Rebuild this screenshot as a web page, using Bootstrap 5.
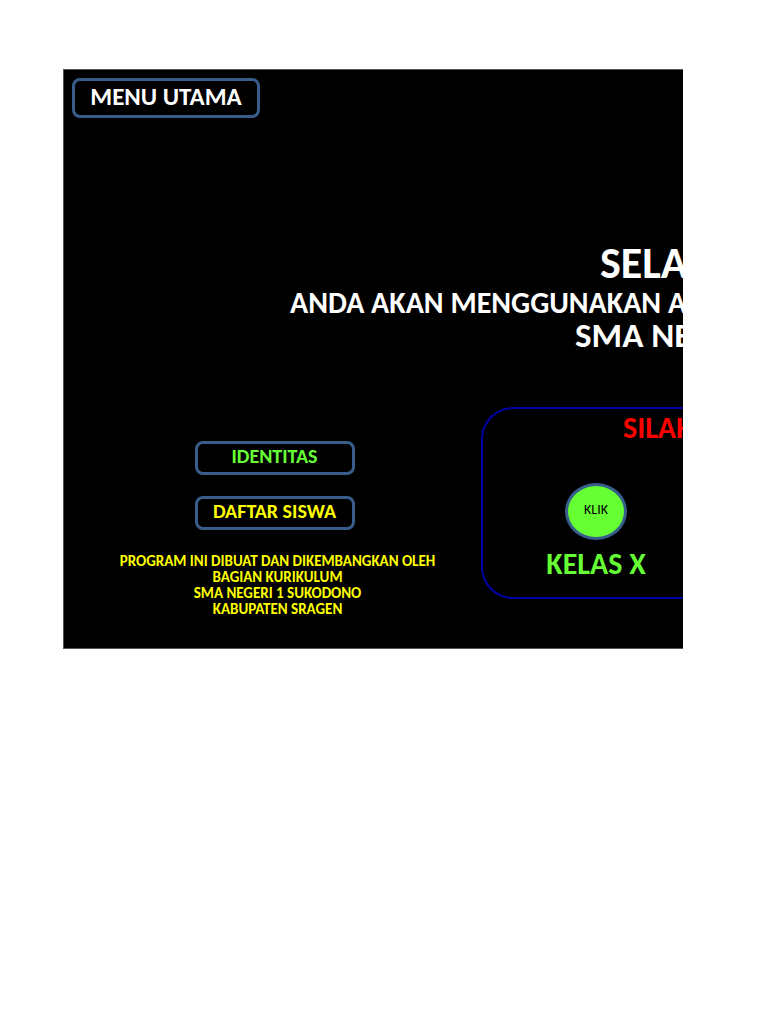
<!DOCTYPE html>
<html lang="id">
<head>
<meta charset="utf-8">
<meta name="viewport" content="width=device-width, initial-scale=1">
<title>Menu Utama</title>
<link href="https://cdn.jsdelivr.net/npm/bootstrap@5.3.0/dist/css/bootstrap.min.css" rel="stylesheet">
<style>
  body { font-family: Carlito, Calibri, Lato, sans-serif; background: #fff; }
  .page { padding: 69px 85px 69px 63px; }
  .panel { background: #000; border: 1px solid #555; border-width: 1px 0 1px 1px; padding: 8px 0 31px 8px; }
  .outline-btn { border: 3px solid #385d8a; border-radius: 8px; background: #000; font-weight: 700; padding: 0; color: #fff; }
  .btn-menu { width: 188px; height: 40px; font-size: 25px; line-height: 32px; padding-bottom: 4px; }
  .btn-side { width: 160px; height: 34px; font-size: 20px; line-height: 24px; padding-bottom: 4px; }
  .btn-side + .btn-side { margin-top: 21px; }
  .green { color: #66ff33; }
  .yellow { color: #ffff00; }
  .hero { margin-top: 121px; color: #fff; }
  .hero > * { font-weight: 700; margin: 0; }
  .hero h1 { font-size: 44px; line-height: 48px; padding-left: 528px; }
  .hero p { font-size: 30px; line-height: 32px; padding-left: 218px; }
  .hero h2 { font-size: 35px; line-height: 32px; padding-left: 503px; }
  .lower { display: grid; grid-template-columns: 409px minmax(0, 1fr); margin-top: 56px; }
  .side { padding: 34px 4px 0 0; }
  .credit { font-size: 15px; line-height: 16px; font-weight: 700; margin: 23px 0 0 6px; }
  .classes { border: 2px solid #0000a8; border-right: 0; border-radius: 32px 0 0 32px; height: 192px; }
  .classes h3 { color: #f00; font-size: 30px; line-height: 32px; font-weight: 700; margin: 3px 0 0 140px; }
  .pick { width: 226px; }
  .btn-klik { width: 62px; height: 57px; border: 3px solid #385d8a; border-radius: 50%; background: #66ff33; color: #000; font-size: 14px; line-height: 16px; padding: 0 0 4px; margin-top: 39px; }
  .pick span { font-size: 30px; line-height: 32px; font-weight: 700; margin-top: 8px; }
</style>
</head>
<body>
<div class="page">
  <main class="panel overflow-hidden">
    <button type="button" class="outline-btn btn-menu">MENU UTAMA</button>
    <header class="hero text-nowrap">
      <h1>SELA</h1>
      <p>ANDA AKAN MENGGUNAKAN A</p>
      <h2>SMA NE</h2>
    </header>
    <div class="lower">
      <section class="side d-flex flex-column align-items-center">
        <button type="button" class="outline-btn btn-side green">IDENTITAS</button>
        <button type="button" class="outline-btn btn-side yellow">DAFTAR SISWA</button>
        <p class="credit yellow text-center text-nowrap">PROGRAM INI DIBUAT DAN DIKEMBANGKAN OLEH<br>BAGIAN KURIKULUM<br>SMA NEGERI 1 SUKODONO<br>KABUPATEN SRAGEN</p>
      </section>
      <section class="classes text-nowrap">
        <h3>SILAH</h3>
        <div class="pick d-flex flex-column align-items-center">
          <button type="button" class="btn-klik">KLIK</button>
          <span class="green">KELAS X</span>
        </div>
      </section>
    </div>
  </main>
</div>
<script src="https://cdn.jsdelivr.net/npm/bootstrap@5.3.0/dist/js/bootstrap.bundle.min.js"></script>
</body>
</html>
